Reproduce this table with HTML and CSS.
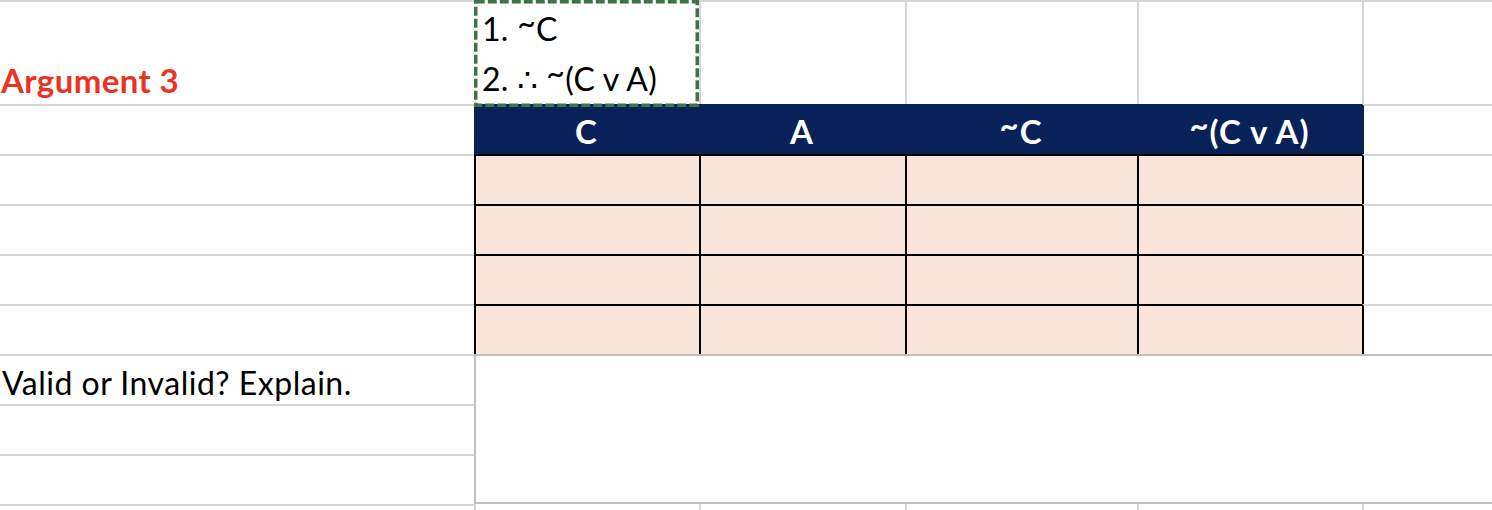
FILE: index.html
```html
<!DOCTYPE html>
<html lang="en">
<head>
<meta charset="utf-8">
<title>Argument 3</title>
<link rel="stylesheet" href="styles.css">
</head>
<body>
<div class="sheet">
  <!-- row 1 -->
  <div class="cell first title">Argument 3</div>
  <div class="cell premise-cell">
    <div class="premises">
      <div>1. <span class="tl">~</span>C</div>
      <div>2. ∴ <span class="tl">~</span>(C v A)</div>
    </div>
    <svg class="dash" width="225" height="107" viewBox="0 0 225 107" aria-hidden="true">
      <rect x="1.75" y="1.75" width="221.5" height="103.5" fill="none" stroke="#3f7449" stroke-width="3.5" stroke-dasharray="9 3"/>
    </svg>
  </div>
  <div class="cell grid"></div>
  <div class="cell grid"></div>
  <div class="cell grid"></div>
  <div class="cell grid"></div>

  <!-- row 2: header -->
  <div class="cell first"></div>
  <div class="cell head">C</div>
  <div class="cell head">A</div>
  <div class="cell head"><span class="tl">~</span>C</div>
  <div class="cell head"><span class="tl">~</span>(C v A)</div>
  <div class="cell after-head"></div>

  <!-- rows 3-6 -->
  <div class="cell first"></div>
  <div class="cell tt"></div><div class="cell tt"></div><div class="cell tt"></div><div class="cell tt"></div>
  <div class="cell after-tt"></div>

  <div class="cell first"></div>
  <div class="cell tt"></div><div class="cell tt"></div><div class="cell tt"></div><div class="cell tt"></div>
  <div class="cell after-tt"></div>

  <div class="cell first"></div>
  <div class="cell tt"></div><div class="cell tt"></div><div class="cell tt"></div><div class="cell tt"></div>
  <div class="cell after-tt"></div>

  <div class="cell first"></div>
  <div class="cell tt"></div><div class="cell tt"></div><div class="cell tt"></div><div class="cell tt"></div>
  <div class="cell after-tt"></div>

  <!-- rows 7-9 -->
  <div class="cell first label">Valid or Invalid? Explain.</div>
  <div class="answer"></div>
  <div class="cell first"></div>
  <div class="cell first"></div>

  <!-- row 10 -->
  <div class="cell first"></div>
  <div class="cell stub"></div>
  <div class="cell stub"></div>
  <div class="cell stub"></div>
  <div class="cell stub"></div>
  <div class="cell stub"></div>
</div>
</body>
</html>
```

FILE: styles.css
```css
html, body {
  margin: 0;
  padding: 0;
  background: #ffffff;
}

.sheet {
  width: 1492px;
  height: 510px;
  overflow: hidden;
  display: grid;
  grid-template-columns: 474px 225px 206px 232px 225px 1fr;
  grid-template-rows: 104px 50px 50px 50px 50px 50px 50px 50px 50px 1fr;
  font-family: Lato, "DejaVu Sans", sans-serif;
  font-size: 32px;
  color: #000000;
}

.cell {
  box-sizing: border-box;
  border-top: 2px solid #d6d6d6;
  min-width: 0;
}

.grid {
  border-left: 2px solid #d6d6d6;
}

.first {
  grid-column: 1;
}

.tl {
  display: inline-block;
  transform: translateY(-0.2em);
}

.title {
  display: flex;
  align-items: flex-end;
  padding: 0 0 4px 1px;
  line-height: 40px;
  font-weight: 700;
  font-size: 33px;
  color: #ea3323;
  letter-spacing: 0.4px;
}

.label {
  display: flex;
  align-items: flex-start;
  padding: 7px 0 0 2px;
  line-height: 40px;
  letter-spacing: 0.5px;
}

.premise-cell {
  position: relative;
  border-top-color: transparent;
}

.premises {
  padding: 2px 0 0 8px;
  line-height: 50px;
  letter-spacing: 0.3px;
  white-space: nowrap;
}

.dash {
  position: absolute;
  top: -2px;
  left: 0;
  z-index: 2;
}

.head {
  background: #082159;
  border-top: none;
  color: #ffffff;
  font-weight: 700;
  font-size: 33px;
  line-height: 46px;
  padding-top: 4px;
  text-align: center;
  letter-spacing: 1px;
  white-space: nowrap;
}

.after-head {
  border-left: 2px solid #082159;
}

.tt {
  background: #f8e4d9;
  border-top: 2px solid #000000;
  border-left: 2px solid #000000;
}

.after-tt {
  border-left: 2px solid #000000;
}

.answer {
  grid-column: 2 / 7;
  grid-row: 7 / 10;
  box-sizing: border-box;
  border: 2px solid #c0c0c0;
  border-right: none;
  background: #ffffff;
}

.stub {
  border-top: none;
  border-left: 2px solid #d6d6d6;
}
```
